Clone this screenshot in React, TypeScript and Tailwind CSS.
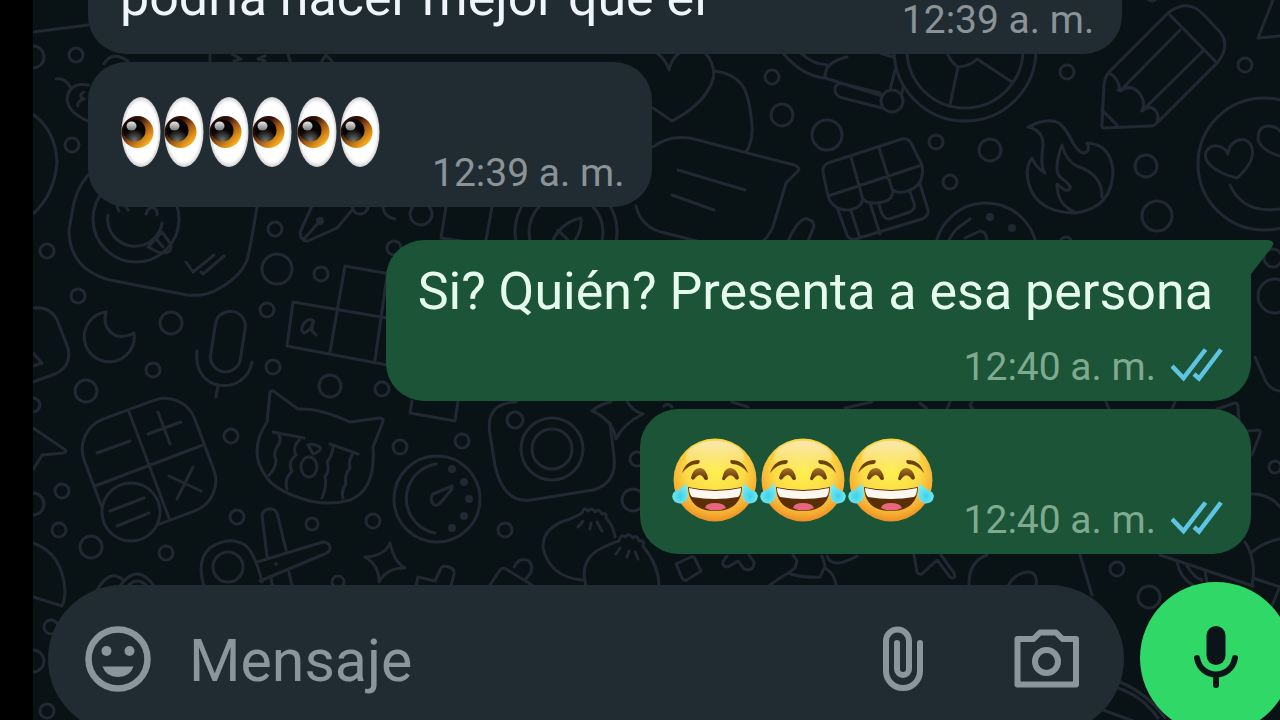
import type { ReactNode } from "react";

// x, y, radius
const dots: [number, number, number][] = [
  [33, 57, 11], [76, 55, 7], [72, 145, 7], [275, 229, 7], [277, 269, 15], [321, 274, 7],
  [267, 310, 7], [273, 367, 7], [330, 386, 11], [382, 389, 7], [47, 251, 7], [78, 296, 7],
  [171, 323, 11], [153, 370, 7], [86, 391, 11], [394, 248, 7], [33, 405, 7], [231, 436, 7],
  [62, 491, 7], [33, 504, 11], [59, 530, 7], [91, 547, 11], [166, 553, 7], [237, 517, 7],
  [312, 524, 6], [400, 447, 7], [462, 441, 7], [373, 521, 7], [505, 530, 7], [633, 500, 11],
  [637, 459, 7], [338, 582, 6], [772, 77, 7], [782, 115, 11], [827, 135, 15], [936, 142, 7],
  [950, 182, 7], [1067, 72, 7], [990, 150, 11], [1146, 166, 11], [1157, 216, 15], [1245, 65, 7],
  [1273, 258, 9], [1275, 296, 17], [1117, 569, 7], [1149, 597, 11], [1275, 467, 6], [51, 627, 7],
  [33, 661, 11], [47, 711, 7], [421, 214, 11], [360, 206, 8], [1152, -4, 5], [1066, 243, 6],
];

const doodles = [
  // left edge
  "M33 32L88 25M56 79Q65 77 71 88M88 85Q70 82 67 98Q67 112 88 121M84 92Q77 96 84 99Q77 101 78 106M33 114Q56 131 57 163Q54 195 33 214M104 64Q112 50 128 61M210 54V61M232 54L241 59L234 61M265 56L258 59L265 61M288 54L290 61M322 61L326 55L332 61",
  // phone with smiley
  "M88 175Q75 190 72 213L69 230Q69 254 85 268Q97 277 110 280L187 295Q206 297 220 288Q241 276 247 260Q250 250 257 207M108 215A27 27 0 0 0 162 223M148 247L160 253Q174 254 170 243L162 232L148 247M157 240L163 247M117 206L119 211M126 207L128 210M146 214Q149 206 154 208Q158 210 157 215M186 262L193 272L214 255M201 272L203 274L224 256",
  // moon, mic
  "M106 312C101 328 114 343 134 333A25 25 0 1 1 106 312ZM197 351C192 394 246 396 252 362M218 385L216 397",
  // card and arrow at the edge
  "M33 308Q50 306 57 320L68 348Q72 366 55 374L33 382M33 353L42 363L33 366M33 428L64 449Q68 452 63 453L42 455L33 470",
  // pen
  "M312 206L300 232Q301 242 308 241L337 228L353 209M304 239L319 222M383 207Q384 217 395 219M446 207L441 238L462 241M492 207L486 240",
  // crossword
  "M345 266L390 274M345 266L330 352M293 302L287 346L387 365M293 302L387 318M387 276L375 360M314 322Q311 317 305 322Q299 330 304 333Q311 331 313 322L312 331L316 335",
  // cat
  "M267 422L270 392Q272 389 276 393L298 409Q320 408 350 422L380 418Q385 418 382 424L373 447Q376 490 350 500Q325 507 300 498Q276 490 267 478Q247 452 267 422M273 432L304 438M330 444L358 454M279 435Q282 441 277 447Q273 453 276 460Q276 468 269 475M299 440Q292 448 296 455Q287 463 292 471Q284 479 287 489M333 448Q332 456 327 462Q330 470 325 477Q327 486 322 498M352 455Q348 462 350 468Q344 476 346 484Q341 490 343 498M308 445Q313 443 320 447Q322 451 313 454Z",
  // scissors
  "M204 586Q196 560 210 548Q228 535 245 545Q255 553 262 582M257 562L323 542Q331 543 330 549Q329 553 322 555L260 581M267 556L262 515Q264 508 272 509Q277 510 278 517L286 550M271 578L273 590M289 572L292 586M33 543Q62 553 65 590Q65 600 62 606L33 597M97 590Q110 568 123 580M120 586Q137 562 154 586M128 586Q137 576 147 586",
  // plate, gauge
  "M412 401L410 413L455 421L458 401M436 464A35 35 0 0 0 435 533M452 486L433 494Q429 500 434 505Q438 506 441 502L452 489Z",
  // sparkles
  "M390 543Q394 562 405 568Q386 568 379 582Q379 565 365 557Q385 556 390 543ZM592 411Q613 420 616 439Q624 423 643 414Q631 410 627 401M592 411Q600 404 611 402",
  // tools by the composer
  "M416 586L418 577L435 581L441 568Q443 565 449 567Q455 569 454 574L451 586M490 585L500 570Q502 567 506 569L532 585M514 567Q520 556 529 561Q534 567 530 574L525 580",
  // camera
  "M516 402Q485 403 490 434L495 466Q504 504 531 500L593 490Q617 483 614 457L610 423",
  // dumplings
  "M615 537Q613 525 606 518Q607 512 602 514Q599 508 595 512Q592 507 588 511Q584 506 582 513Q577 516 570 519Q542 527 543 548Q550 577 582 580M586 586Q579 560 600 549Q614 542 619 541Q621 533 625 537Q629 532 633 538Q637 534 639 541Q645 540 643 546Q659 566 659 586M583 521L578 527M591 523L590 529M597 522L602 531M620 548L616 554M629 551L627 557M635 552L638 559",
  "M676 564L691 557Q694 556 695 559L701 571L687 580Q684 581 682 578ZM727 556Q718 566 728 567L738 561L744 569Q754 572 754 562L749 555M793 555L797 561L795 568L788 573Q800 578 820 577L825 566L822 556M770 585Q778 579 788 573M825 568Q834 573 836 584M827 556Q832 570 857 556M914 555L917 572Q920 577 924 572L937 560L950 577Q957 580 954 573L941 555M969 586Q968 562 987 555M1008 586Q1015 572 1030 572Q1038 574 1036 586M1080 555L1092 595M664 406Q668 402 672 407M732 402L748 407M845 408L872 402M920 403L927 409M950 402L947 409M972 402Q968 405 973 409M1106 402L1109 409M1175 402L1172 409",
  // right edge
  "M1160 555L1253 586M1177 562Q1180 578 1194 586M1187 566Q1194 578 1202 580M1205 570L1207 583M1255 357L1266 382Q1271 390 1280 391M1217 409L1235 403Q1238 403 1238 407L1239 420M1248 431L1258 430Q1261 430 1260 434L1252 455M1252 494Q1270 494 1280 507M1245 542Q1257 560 1252 586M1252 552Q1264 542 1280 539M1253 578L1280 587M1280 586L1272 606M1120 682Q1148 694 1165 718M1118 688Q1142 696 1158 718M1103 710L1133 721",
  // heart and bubble
  "M657 53Q666 60 669 70Q671 60 679 53M705 53Q716 65 713 79Q706 103 672 121L653 108M715 71Q737 74 745 90Q750 102 752 125Q753 142 746 152M653 147Q668 135 690 138L794 165Q802 168 797 172L786 183L775 220Q772 233 763 241M636 206Q641 228 665 233L697 241M678 170L745 190M672 195L714 210",
  // banjo
  "M783 53Q802 76 825 78M801 53Q812 64 827 65M825 78Q824 62 847 57M825 78L895 100M882 108L843 98Q834 96 835 88Q837 82 844 84L880 93M895 70L890 90M903 88L900 104M880 53L893 57",
  // wheel
  "M950 105L958 67M977 59L1012 82M958 67Q971 66 977 59M948 55Q952 63 958 67",
  // pencil
  "M1168 13Q1187 -2 1203 14L1220 32Q1231 46 1217 63L1157 123Q1154 126 1151 126L1104 128Q1101 128 1102 124L1104 84Q1105 77 1109 72ZM1168 13L1217 63M1180 30L1120 91L1118 90M1203 51L1142 111M1109 73Q1119 78 1120 91Q1132 83 1140 94Q1146 103 1142 111Q1151 104 1156 111Q1160 117 1156 124M1102 110L1117 125",
  // flame
  "M1028 127Q1047 117 1059 123Q1067 130 1073 143Q1079 153 1084 153Q1091 151 1087 143Q1110 144 1113 170Q1113 208 1075 213Q1029 212 1027 172Q1028 163 1032 158Q1036 168 1045 173Q1040 167 1043 147Q1044 130 1028 127ZM1062 145Q1053 170 1060 177Q1067 182 1070 186Q1071 191 1065 190Q1060 187 1057 184Q1057 205 1075 212M1062 145Q1066 161 1077 166Q1103 175 1102 197",
  "M1273 0L1258 38L1280 36",
  // heart eyes
  "M1237 178C1212 172 1203 160 1206 152C1211 143 1223 144 1228 154C1229 141 1244 134 1251 145C1256 156 1248 168 1237 178ZM1280 156Q1260 150 1258 139Q1258 125 1270 126Q1277 127 1280 131M1230 185Q1243 214 1280 209",
  // shop
  "M828 196L823 172Q822 166 828 163L902 139Q908 138 911 143L922 165Q925 184 910 190Q899 195 893 190Q893 200 883 202Q868 205 863 199Q861 208 850 210Q833 211 828 196L922 165M851 157L863 200M879 148L893 192M838 210L847 235Q849 240 856 239L922 219Q929 216 928 210L920 184M851 211L860 238M870 203L880 234M879 204Q882 219 889 219L910 212Q916 209 914 203L910 192M788 241Q799 217 808 219Q816 222 813 229L808 241",
  "M958 228L970 219M965 238L980 231Q986 231 987 240M553 240Q562 222 581 218Q582 230 575 240M558 230L568 240",
];

function Wallpaper() {
  return (
    <svg
      className="absolute inset-0 h-full w-full"
      viewBox="33 0 1247 720"
      preserveAspectRatio="xMinYMin slice"
      fill="none"
      stroke="#222832"
      strokeWidth="3"
      strokeLinecap="round"
      strokeLinejoin="round"
      aria-hidden="true"
    >
      {dots.map(([x, y, r]) => (
        <circle key={`${x}-${y}`} cx={x} cy={y} r={r} />
      ))}
      {doodles.map((d) => (
        <path key={d.slice(0, 20)} d={d} />
      ))}
      <circle cx="136" cy="219" r="43" />
      <rect x="213" y="311" width="30" height="61" rx="15" transform="rotate(9 228 341)" />
      {/* calculator */}
      <rect x="90" y="406" width="118" height="118" rx="32" transform="rotate(-20.5 149 465)" />
      <path d="M129 412L169 518M95 486L203 445M97 453L130 441M148 434L181 422M158 412L170 444M169 476L201 491M193 467L177 499" />
      <circle cx="131" cy="512" r="29" fill="#091316" />
      <path d="M110 511L144 498M117 526L149 513" />
      <ellipse cx="309" cy="467" rx="8" ry="10" />
      <circle cx="228" cy="567" r="15" />
      <circle cx="437" cy="499" r="43" />
      <circle cx="515" cy="420" r="8" />
      <circle cx="552" cy="449" r="31" />
      <circle cx="552" cy="449" r="20" />
      <circle cx="892" cy="101" r="11" fill="#091316" />
      <circle cx="965" cy="50" r="71" />
      <circle cx="965" cy="50" r="58" />
      <circle cx="1264" cy="164" r="66" />
      <circle cx="986" cy="254" r="51" />
      <path d="M949 240Q955 228 965 223" />
      <circle cx="566" cy="232" r="51" />
      <circle cx="566" cy="232" r="37" />
      <g fill="#222832" stroke="none">
        <circle cx="320" cy="221" r="4" />
        <circle cx="276" cy="564" r="2" />
        <circle cx="452" cy="469" r="4" />
        <circle cx="464" cy="482" r="4" />
        <circle cx="469" cy="499" r="4" />
        <circle cx="464" cy="516" r="4" />
        <circle cx="452" cy="528" r="4" />
        <circle cx="990" cy="217" r="4" />
        <circle cx="1012" cy="228" r="4" />
      </g>
    </svg>
  );
}

function EmojiDefs() {
  return (
    <svg className="absolute h-0 w-0" aria-hidden="true">
      <defs>
        <radialGradient id="white" cx="50%" cy="50%" r="50%">
          <stop offset="0.84" stopColor="#ffffff" />
          <stop offset="1" stopColor="#d2d0d4" />
        </radialGradient>
        <linearGradient id="iris" x1="0.1" y1="0.1" x2="0.8" y2="0.85">
          <stop offset="0.3" stopColor="#2c0f08" />
          <stop offset="0.62" stopColor="#a55a14" />
          <stop offset="1" stopColor="#f7a81c" />
        </linearGradient>
        <radialGradient id="glow" cx="50%" cy="95%" r="50%">
          <stop offset="0" stopColor="#6f7470" />
          <stop offset="1" stopColor="#080504" />
        </radialGradient>
        <linearGradient id="shine" x1="0" y1="0" x2="0" y2="1">
          <stop offset="0" stopColor="#e8e8e8" />
          <stop offset="1" stopColor="#77777a" />
        </linearGradient>
        <radialGradient id="face" cx="50%" cy="38%" r="62%">
          <stop offset="0" stopColor="#fdf04f" />
          <stop offset="0.55" stopColor="#fbdc45" />
          <stop offset="0.85" stopColor="#f6ae33" />
          <stop offset="1" stopColor="#ee8f24" />
        </radialGradient>
        <linearGradient id="forehead" x1="0" y1="0" x2="0" y2="1">
          <stop offset="0" stopColor="#fbe8b0" />
          <stop offset="1" stopColor="#fbe8a0" stopOpacity="0" />
        </linearGradient>
        <radialGradient id="tear" cx="50%" cy="65%" r="60%">
          <stop offset="0" stopColor="#3fd0ea" />
          <stop offset="1" stopColor="#7cecf2" />
        </radialGradient>
        <linearGradient id="lid" x1="0" y1="0" x2="0" y2="1">
          <stop offset="0" stopColor="#a5702a" />
          <stop offset="1" stopColor="#5b3206" />
        </linearGradient>
      </defs>
    </svg>
  );
}

function Eye({ x }: { x: number }) {
  return (
    <g transform={`translate(${x} 0)`}>
      <ellipse cx="20" cy="44" rx="19.5" ry="35" fill="url(#white)" />
      <circle cx="16.5" cy="44" r="16" fill="url(#iris)" />
      <circle cx="13.5" cy="42.500" r="11" fill="url(#glow)" />
      <ellipse cx="10.5" cy="38" rx="5" ry="4.500" fill="url(#shine)" />
    </g>
  );
}

function Eyes() {
  return (
    <svg className="size-22" viewBox="0 0 88 88" role="img" aria-label="👀">
      <Eye x={1} />
      <Eye x={44} />
    </svg>
  );
}

function Joy() {
  return (
    <svg className="size-22" viewBox="0 0 88 88" role="img" aria-label="😂">
      <circle cx="43" cy="45" r="41.5" fill="url(#face)" />
      <ellipse cx="43" cy="22" rx="29" ry="16" fill="url(#forehead)" />
      <g fill="#6b4208">
        <path d="M10 38Q14 25 27 25Q29 27 26 29Q17 29 10 38Z" />
        <path d="M76 38Q72 25 59 25Q57 27 60 29Q69 29 76 38Z" />
      </g>
      <g fill="url(#lid)">
        <path d="M19 43Q21 33 28 33Q35 34 36 44Q33 47 31 42Q28 38 24 42Q21 47 19 43Z" />
        <path d="M50 44Q52 33 58 33Q65 33 67 43Q65 47 62 42Q58 38 54 43Q52 47 50 44Z" />
      </g>
      <path d="M16 52Q43 58 70 52Q69 76 43 76Q17 76 16 52Z" fill="#5b2f06" />
      <path d="M17 53Q43 59 69 53Q69 60 66 62Q43 66 20 62Q17 59 17 53Z" fill="#fdf7f2" />
      <path d="M33 73Q34 68 43 68Q52 68 54 73Q43 78 33 73Z" fill="#e8677c" />
      <path d="M14 48Q17 58 15 64Q10 71 3 67Q-2 62 2 57Q10 54 14 48Z" fill="url(#tear)" />
      <path d="M72 48Q69 58 71 64Q76 71 83 67Q88 62 84 57Q76 54 72 48Z" fill="url(#tear)" />
    </svg>
  );
}

function Ticks() {
  return (
    <svg className="mb-[5px] h-[34px] w-[52px]" viewBox="0 0 52 34" fill="none" stroke="#5ec4e2" strokeWidth="4.5" role="img" aria-label="Leído">
      <path d="M1 18L12.500 30L34.500 1.500" />
      <path d="M23 26L28 30.500L50 1.500" />
    </svg>
  );
}

type BubbleProps = { sent?: boolean; tail?: boolean; className?: string; children: ReactNode };

function Bubble({ sent, tail, className = "", children }: BubbleProps) {
  return (
    <article
      className={`relative rounded-[38px] pr-7 pb-3.5 pl-8 ${
        sent ? "self-end bg-[#1b5436] text-[#e6fbee]" : "self-start bg-[#212c32] text-[#eef5fb]"
      } ${tail ? "rounded-tr-none" : ""} ${className}`}
    >
      {children}
      {tail && (
        <svg className="absolute top-0 left-full h-9 w-6" viewBox="0 0 24 36" fill="#1b5436" aria-hidden="true">
          <path d="M-1 0H17Q25 1 21 7L0 34H-1Z" />
        </svg>
      )}
    </article>
  );
}

function Time({ value, sent }: { value: string; sent?: boolean }) {
  return (
    <div className="flex shrink-0 items-end gap-[15px]">
      <time className={`text-[39px] leading-10 whitespace-nowrap ${sent ? "text-[#80aa8f]" : "text-[#8a9397]"}`}>
        {value}
      </time>
      {sent && <Ticks />}
    </div>
  );
}

export default function App() {
  return (
    <div className="flex h-screen overflow-hidden bg-black font-[Roboto,sans-serif]">
      <main className="relative ml-[33px] flex min-w-0 flex-1 flex-col overflow-hidden bg-[#091316]">
        <Wallpaper />
        <EmojiDefs />

        {/* Mensajes */}
        <section className="relative flex min-h-0 flex-1 flex-col justify-end pr-[29px] pb-7 pl-[55px]">
          <Bubble className="flex items-end gap-[195px] pt-6">
            <p className="mb-3.5 text-[52px] leading-14 whitespace-nowrap">podría hacer mejor que él</p>
            <Time value="12:39 a. m." />
          </Bubble>

          <Bubble className="mt-2 flex items-end gap-12 pt-[26px]">
            <div className="mb-[17px] flex">
              <Eyes />
              <Eyes />
              <Eyes />
            </div>
            <Time value="12:39 a. m." />
          </Bubble>

          <Bubble sent tail className="mt-[33px] flex flex-col items-end gap-[27px] pt-6">
            <p className="pr-2.5 text-[52px] leading-14 whitespace-nowrap">Si? Quién? Presenta a esa persona</p>
            <Time value="12:40 a. m." sent />
          </Bubble>

          <Bubble sent className="mt-2 flex items-end gap-7 pt-[26px]">
            <div className="mb-[17px] flex">
              <Joy />
              <Joy />
              <Joy />
            </div>
            <Time value="12:40 a. m." sent />
          </Bubble>
        </section>

        {/* Barra para escribir */}
        <footer className="relative flex h-[138px] items-start gap-4 pl-[15px]">
          <div className="mt-[3px] flex h-[148px] min-w-0 flex-1 items-center rounded-full bg-[#212c32] pr-11 pl-[37px] text-[#8a969b]">
            <button type="button" aria-label="Emojis" className="shrink-0">
              <svg className="size-[66px]" viewBox="0 0 66 66" fill="currentColor">
                <circle cx="33" cy="33" r="29.500" fill="none" stroke="currentColor" strokeWidth="6.500" />
                <circle cx="21.500" cy="25" r="5" />
                <circle cx="44.500" cy="25" r="5" />
                <path d="M17.500 40.500H48.500Q45 51 33 51Q21 51 17.500 40.500Z" />
              </svg>
            </button>
            <input
              type="text"
              aria-label="Mensaje"
              placeholder="Mensaje"
              className="ml-[38px] min-w-0 flex-1 bg-transparent pt-1 text-[59px] leading-[70px] outline-none placeholder:text-[#8a969b]"
            />
            <button type="button" aria-label="Adjuntar" className="shrink-0">
              <svg className="h-[66px] w-11" viewBox="0 0 44 66" fill="none" stroke="currentColor" strokeWidth="6" strokeLinecap="round">
                <path d="M39 17V45A17 17 0 0 1 5 45V15A11.500 11.500 0 0 1 28 15V43A6 6 0 0 1 16 43V17" />
              </svg>
            </button>
            <button type="button" aria-label="Cámara" className="ml-[89px] shrink-0">
              <svg className="h-[60px] w-[66px]" viewBox="0 0 66 60" fill="none" stroke="currentColor" strokeWidth="6" strokeLinejoin="round">
                <path d="M3.500 10H19.500L26 3.500H42L48.500 10H62V55.500H3.500Z" />
                <circle cx="32.500" cy="32.500" r="11.500" />
              </svg>
            </button>
          </div>
          <button
            type="button"
            aria-label="Grabar mensaje de voz"
            className="-mr-3 flex size-[152px] shrink-0 items-center justify-center rounded-full bg-[#2fd867] text-[#0a1419]"
          >
            <svg className="h-16 w-[46px]" viewBox="0 0 46 64" fill="none" stroke="currentColor" strokeWidth="6" strokeLinecap="round">
              <rect x="13.500" y="0" width="19" height="39" rx="9.500" fill="currentColor" stroke="none" />
              <path d="M4 32C8 54 38 54 42 32M23 49V59" />
            </svg>
          </button>
        </footer>
      </main>
    </div>
  );
}
